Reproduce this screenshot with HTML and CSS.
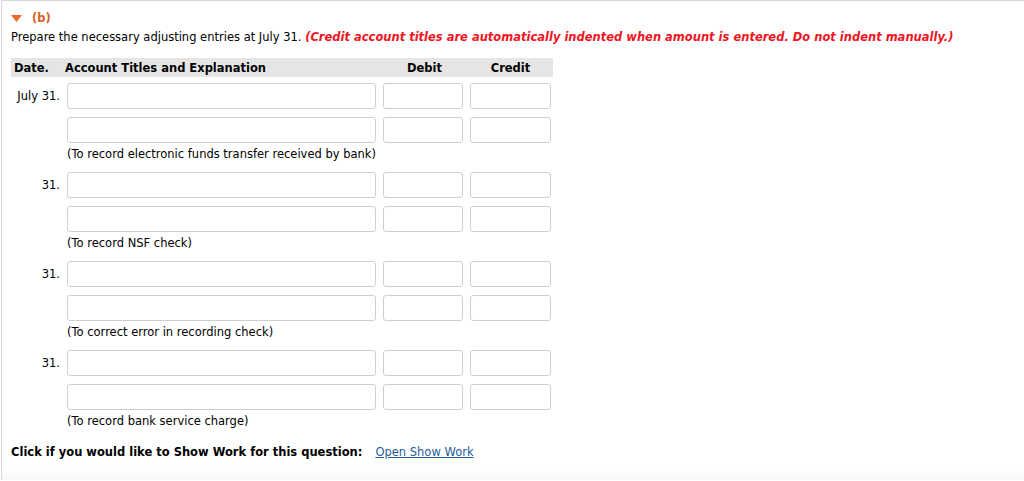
FILE: index.html
```html
<!DOCTYPE html>
<html>
<head>
<meta charset="utf-8">
<link rel="stylesheet" href="styles.css">
</head>
<body>
<div class="panel">
  <div class="part-head">
    <svg class="caret" width="11" height="7" viewBox="0 0 11 7"><polygon points="0,0 11,0 5.5,7" fill="#ee6a2b"/></svg>
    <span class="part-label">(b)</span>
  </div>
  <p class="prompt">Prepare the necessary adjusting entries at July 31. <em class="warn">(Credit account titles are automatically indented when amount is entered. Do not indent manually.)</em></p>

  <div class="journal">
    <div class="jhead">
      <div class="h-date">Date.</div>
      <div class="h-acct">Account Titles and Explanation</div>
      <div class="h-amt">Debit</div>
      <div class="h-amt">Credit</div>
    </div>

    <div class="group">
      <div class="row"><div class="date">July 31.</div><input class="acct"><input class="amt"><input class="amt"></div>
      <div class="row"><div class="date"></div><input class="acct"><input class="amt"><input class="amt"></div>
      <div class="expl">(To record electronic funds transfer received by bank)</div>
    </div>

    <div class="group">
      <div class="row"><div class="date">31.</div><input class="acct"><input class="amt"><input class="amt"></div>
      <div class="row"><div class="date"></div><input class="acct"><input class="amt"><input class="amt"></div>
      <div class="expl">(To record NSF check)</div>
    </div>

    <div class="group">
      <div class="row"><div class="date">31.</div><input class="acct"><input class="amt"><input class="amt"></div>
      <div class="row"><div class="date"></div><input class="acct"><input class="amt"><input class="amt"></div>
      <div class="expl">(To correct error in recording check)</div>
    </div>

    <div class="group">
      <div class="row"><div class="date">31.</div><input class="acct"><input class="amt"><input class="amt"></div>
      <div class="row"><div class="date"></div><input class="acct"><input class="amt"><input class="amt"></div>
      <div class="expl">(To record bank service charge)</div>
    </div>
  </div>

  <p class="showwork"><b>Click if you would like to Show Work for this question:</b><a href="#" class="swlink">Open Show Work</a></p>
  <div class="foot"></div>
</div>
</body>
</html>
```

FILE: styles.css
```css
html, body {
  margin: 0;
  padding: 0;
  background: #ffffff;
}
body {
  font-family: "DejaVu Sans", Verdana, sans-serif;
  font-size: 11.5px;
  color: #000;
}
.panel {
  margin-left: 1px;
  border-top: 1px solid #d3d9e2;
  border-left: 1px solid #d3d9e2;
  padding: 0 0 0 9px;
  height: 480px;
  position: relative;
  box-sizing: border-box;
}
.part-head {
  display: flex;
  align-items: center;
  height: 14px;
  padding-top: 10px;
}
.caret {
  display: block;
  margin-right: 10px;
}
.part-label {
  color: #d9602a;
  font-weight: bold;
  font-size: 11.5px;
}
.prompt {
  margin: 5px 0 0 0;
  line-height: 14px;
}
.prompt-text {
  letter-spacing: 0.1px;
}
.warn {
  color: #f0141e;
  font-weight: bold;
  font-style: italic;
}
.journal {
  margin-top: 14px;
  width: 542px;
}
.jhead {
  display: grid;
  grid-template-columns: 54px 316px 87px 85px;
  background: #e5e5e5;
  height: 19px;
  align-items: center;
  font-weight: bold;
}
.h-date { padding-left: 3px; }
.h-acct { padding-left: 0; }
.h-amt { text-align: center; }
.group {
  padding-top: 6px;
}
.group + .group {
  padding-top: 11px;
}
.row {
  display: grid;
  grid-template-columns: 49px 309px 80px 81px;
  column-gap: 7px;
  align-items: center;
  margin-bottom: 8px;
}
.row + .row {
  margin-bottom: 0;
}
.date {
  text-align: right;
}
input {
  display: block;
  box-sizing: border-box;
  height: 26px;
  margin: 0;
  border: 1px solid #cfcfcf;
  border-radius: 3px;
  background: #fff;
  font: inherit;
  padding: 0 4px;
}
.expl {
  padding-left: 56px;
  margin-top: 4px;
  line-height: 14px;
}
.showwork {
  margin: 17px 0 0 0;
  line-height: 14px;
}
.swlink {
  margin-left: 13px;
  color: #1f5d99;
  text-decoration: underline;
}
.foot {
  position: absolute;
  left: 0;
  right: 0;
  bottom: 0;
  height: 11px;
  background: linear-gradient(#ffffff, #f7f7f7);
}
```
